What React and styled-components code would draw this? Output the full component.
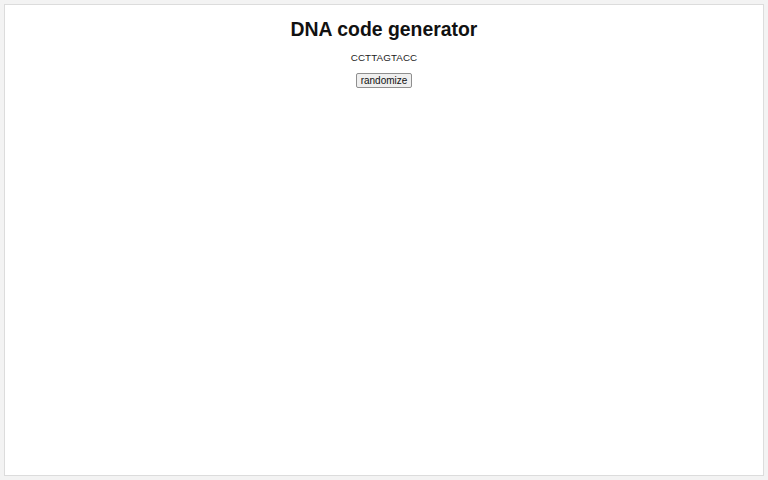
import React, { useState } from 'react';
import styled, { createGlobalStyle } from 'styled-components';

const GlobalStyle = createGlobalStyle`
  html, body {
    margin: 0;
    height: 100%;
    background: #f3f3f3;
    font-family: 'Liberation Sans', Arial, sans-serif;
  }
  #root {
    height: 100%;
  }
`;

const Page = styled.div`
  box-sizing: border-box;
  height: 100%;
  padding: 4px;
`;

const Panel = styled.div`
  box-sizing: border-box;
  height: 100%;
  background: #fff;
  border: 1px solid #dcdcdc;
  display: flex;
  flex-direction: column;
  align-items: center;
  padding-top: 13px;
`;

const Title = styled.h1`
  margin: 0;
  font-size: 19.4px;
  font-weight: bold;
  color: #111;
  line-height: 23px;
`;

const Code = styled.p`
  margin: 11px 0 0;
  font-size: 9.8px;
  line-height: 11px;
  letter-spacing: 0.1px;
  color: #222;
`;

const Button = styled.button`
  margin-top: 10px;
  font-family: 'Liberation Sans', Arial, sans-serif;
  font-size: 10px;
  line-height: 11px;
  padding: 1px 4px;
  color: #111;
  background: #efefef;
  border: 1px solid #8f8f8f;
  border-radius: 2px;
`;

const BASES = ['A', 'C', 'G', 'T'];
const randomCode = () =>
  Array.from({ length: 10 }, () => BASES[Math.floor(Math.random() * 4)]).join('');

export default function App() {
  const [code, setCode] = useState('CCTTAGTACC');
  return (
    <>
      <GlobalStyle />
      <Page>
        <Panel>
          <Title>DNA code generator</Title>
          <Code>{code}</Code>
          <Button onClick={() => setCode(randomCode())}>randomize</Button>
        </Panel>
      </Page>
    </>
  );
}
